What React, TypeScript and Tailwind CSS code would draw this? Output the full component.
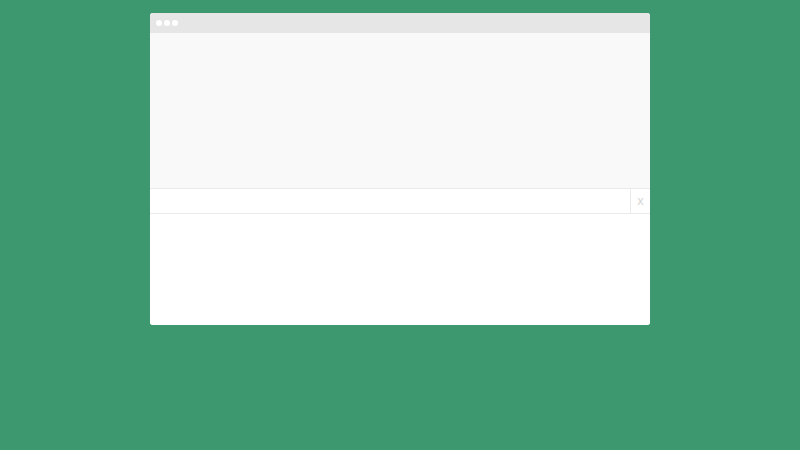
export default function App() {
  return (
    <div className="w-[800px] h-[450px] bg-[#3d976f] flex justify-center pt-[13px] font-['Liberation_Sans',sans-serif]">
      <div className="w-[500px] h-[312px] bg-white rounded-[3px] overflow-hidden flex flex-col">
        {/* title bar */}
        <div className="h-5 bg-[#e6e6e6] flex items-center gap-[2px] pl-[6px]">
          <span className="w-[6px] h-[6px] rounded-full bg-white" />
          <span className="w-[6px] h-[6px] rounded-full bg-white" />
          <span className="w-[6px] h-[6px] rounded-full bg-white" />
        </div>
        <div className="h-[155px] bg-[#f9f9f9]" />
        <div className="h-[26px] flex border-y border-[#ebebeb]">
          <input className="flex-1 bg-white outline-none px-2 text-sm text-gray-600" />
          <button className="w-5 border-l border-[#ebebeb] text-[13px] text-[#d6d6d6] flex items-center justify-center">
            x
          </button>
        </div>
        <div className="flex-1 bg-white" />
      </div>
    </div>
  );
}
